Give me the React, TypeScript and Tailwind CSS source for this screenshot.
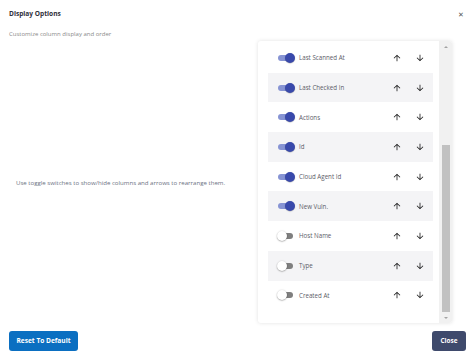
import React from "react";

const rows = [
  { label: "Last Scanned At", on: true },
  { label: "Last Checked In", on: true },
  { label: "Actions", on: true },
  { label: "Id", on: true },
  { label: "Cloud Agent Id", on: true },
  { label: "New Vuln.", on: true },
  { label: "Host Name", on: false },
  { label: "Type", on: false },
  { label: "Created At", on: false },
];

function ArrowUp() {
  return (
    <svg width="10" height="10" viewBox="0 0 24 24" fill="#1f1f1f">
      <path d="M4 12l1.41 1.41L11 7.83V20h2V7.83l5.58 5.59L20 12l-8-8-8 8z" />
    </svg>
  );
}
function ArrowDown() {
  return (
    <svg width="10" height="10" viewBox="0 0 24 24" fill="#1f1f1f">
      <path d="M20 12l-1.41-1.41L13 16.17V4h-2v12.17l-5.58-5.59L4 12l8 8 8-8z" />
    </svg>
  );
}

function Toggle({ on }: { on: boolean }) {
  return (
    <div className="relative w-[18px] h-[10px] flex items-center">
      <div
        className={
          "ml-[1px] w-[15px] h-[6px] rounded-full " +
          (on ? "bg-[#8794d4]" : "bg-[#7f7f7f]")
        }
      />
      <div
        className={
          "absolute top-0 w-[10px] h-[10px] rounded-full " +
          (on
            ? "right-0 bg-[#3949ab] shadow-[0_0.5px_1px_rgba(0,0,0,0.3)]"
            : "left-0 bg-white shadow-[0_0.5px_1.5px_rgba(0,0,0,0.45)]")
        }
      />
    </div>
  );
}

export default function App() {
  return (
    <div className="w-[474px] h-[356px] bg-white flex flex-col font-['Open_Sans',sans-serif]">
      <div className="h-[28px] flex items-center justify-between pl-[9px] pr-[10px]">
        <span className="text-[6.6px] font-bold text-[#2f2f3a]">Display Options</span>
        <span className="text-[7px] text-[#555] leading-none">✕</span>
      </div>
      <div className="h-[13px] pl-[9px] text-[6px] text-[#8a8a8a] leading-[13px]">
        Customize column display and order
      </div>
      <div className="h-[282px] flex">
        <div className="w-[258px] flex items-center pl-[16px] pt-[2px]">
          <span className="text-[6.1px] text-[#6b7182]">
            Use toggle switches to show/hide columns and arrows to rearrange them.
          </span>
        </div>
        <div className="w-[194px] h-full bg-white rounded-[3px] shadow-[0_0_4px_rgba(0,0,0,0.12)] flex overflow-hidden">
          <div className="flex-1 pt-[2px] pl-[10px] pr-[6px]">
            {rows.map((r, i) => (
              <div
                key={r.label}
                className={
                  "h-[29.7px] flex items-center pl-[9px] " +
                  (i % 2 === 1 ? "bg-[#f4f4f6]" : "bg-white")
                }
              >
                <Toggle on={r.on} />
                <span className="ml-[4px] w-[91px] text-[6.2px] text-[#5c5c68]">{r.label}</span>
                <div className="flex items-center gap-[13px] ml-[2px]">
                  <ArrowUp />
                  <ArrowDown />
                </div>
              </div>
            ))}
          </div>
          <div className="w-[13px] h-full bg-[#f1f1f1] flex flex-col items-center">
            <div className="h-[104px] w-full flex justify-center pt-[5px]">
              <div className="w-0 h-0 border-l-[2px] border-r-[2px] border-b-[2px] border-l-transparent border-r-transparent border-b-[#a3a3a3]" />
            </div>
            <div className="w-[8px] h-[167px] bg-[#c1c1c1]" />
            <div className="flex-1 w-full flex justify-center items-center">
              <div className="w-0 h-0 border-l-[2px] border-r-[2px] border-t-[2px] border-l-transparent border-r-transparent border-t-[#a3a3a3]" />
            </div>
          </div>
        </div>
      </div>
      <div className="flex-1 flex items-start justify-between pl-[9px] pr-[8px] pt-[8px]">
        <button className="h-[20px] w-[69px] rounded-[3px] bg-[#0b6fc1] text-white text-[6.6px] font-bold">
          Reset To Default
        </button>
        <button className="h-[20px] w-[34px] rounded-[3px] bg-[#3f4a6c] text-white text-[6.4px] font-bold">
          Close
        </button>
      </div>
    </div>
  );
}
